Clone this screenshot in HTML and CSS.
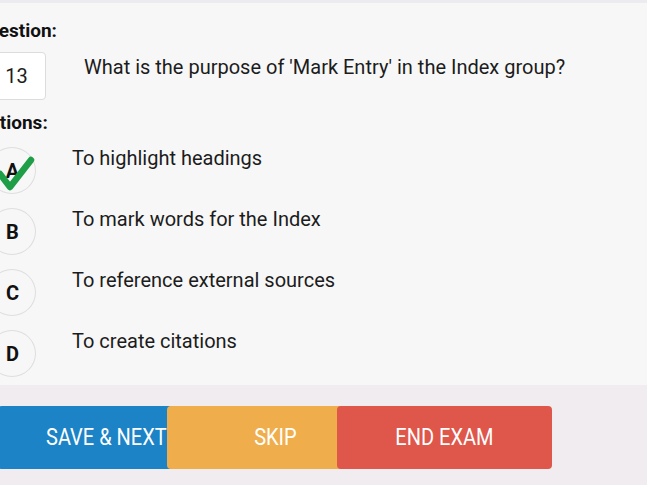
FILE: index.html
```html
<!DOCTYPE html>
<html>
<head>
<meta charset="utf-8">
<link rel="stylesheet" href="styles.css">
</head>
<body>
<div class="topbar"></div>
<main class="content">
  <div class="label label-q">Question:</div>
  <div class="qrow">
    <div class="qnum">13</div>
    <div class="qtext">What is the purpose of 'Mark Entry' in the Index group?</div>
  </div>
  <div class="label label-o">Options:</div>
  <div class="options">
    <div class="opt">
      <div class="circle">A
        <svg class="check" width="44" height="40" viewBox="0 0 44 40"><path d="M3 20 L13 33 L34 6" fill="none" stroke="#1f9e48" stroke-width="6.5" stroke-linecap="round" stroke-linejoin="round"/></svg>
      </div>
      <div class="otext">To highlight headings</div>
    </div>
    <div class="opt">
      <div class="circle">B</div>
      <div class="otext">To mark words for the Index</div>
    </div>
    <div class="opt">
      <div class="circle">C</div>
      <div class="otext">To reference external sources</div>
    </div>
    <div class="opt">
      <div class="circle">D</div>
      <div class="otext">To create citations</div>
    </div>
  </div>
</main>
<footer class="footer">
  <button class="btn btn-blue"><span class="btn-label">SAVE &amp; NEXT</span></button>
  <button class="btn btn-yellow"><span class="btn-label">SKIP</span></button>
  <button class="btn btn-red"><span class="btn-label">END EXAM</span></button>
</footer>
</body>
</html>
```
FILE: styles.css
```css
html, body {
  margin: 0;
  padding: 0;
}
body {
  width: 647px;
  height: 485px;
  overflow: hidden;
  background: #f7f7f8;
  font-family: Roboto, "Liberation Sans", sans-serif;
  color: #1c1c1c;
}
.topbar {
  height: 3px;
  background: #ebebf0;
}
.content {
  margin-left: -24px;
  height: 382px;
  display: flex;
  flex-direction: column;
}
.label {
  font-weight: 700;
  font-size: 19px;
  line-height: 22px;
  color: #111;
}
.label-q {
  margin-top: 17px;
  margin-left: -1px;
}
.qrow {
  display: flex;
  margin-top: 10px;
}
.qnum {
  box-sizing: border-box;
  margin-left: 10px;
  width: 60px;
  height: 48px;
  background: #fff;
  border: 1px solid #dcdcdc;
  border-radius: 4px;
  font-size: 20px;
  display: flex;
  align-items: center;
  justify-content: center;
  padding-left: 1px;
  padding-bottom: 1px;
}
.qtext {
  margin-left: 38px;
  margin-top: 4px;
  font-size: 20px;
  line-height: 22px;
}
.label-o {
  margin-top: 12px;
}
.options {
  display: flex;
  flex-direction: column;
  gap: 14px;
  margin-top: 13px;
}
.opt {
  display: flex;
  align-items: flex-start;
}
.circle {
  position: relative;
  box-sizing: border-box;
  margin-left: 12px;
  width: 48px;
  height: 47px;
  border: 1px solid #dedede;
  border-radius: 50%;
  display: flex;
  align-items: center;
  justify-content: center;
  font-weight: 700;
  font-size: 20px;
  color: #111;
  padding-left: 1px;
}
.check {
  position: absolute;
  left: 8px;
  top: 6px;
}
.otext {
  margin-left: 36px;
  margin-top: 0;
  font-size: 20px;
  line-height: 22px;
}
.footer {
  height: 100px;
  background: #f0ecef;
  display: flex;
  align-items: flex-start;
  padding-top: 21px;
  box-sizing: border-box;
}
.btn {
  position: relative;
  height: 63px;
  width: 216px;
  border: none;
  border-radius: 4px;
  color: #fff;
  font-family: Roboto, "Liberation Sans", sans-serif;
  font-size: 23px;
  padding: 0;
  flex: none;
}
.btn-label {
  display: inline-block;
  transform: scaleX(0.87);
  white-space: nowrap;
}
.btn-blue {
  margin-left: -2px;
  background: #1b83c6;
}
.btn-yellow {
  margin-left: -47px;
  background: #efae4b;
}
.btn-red {
  margin-left: -46px;
  width: 215px;
  background: #df564a;
}
```
